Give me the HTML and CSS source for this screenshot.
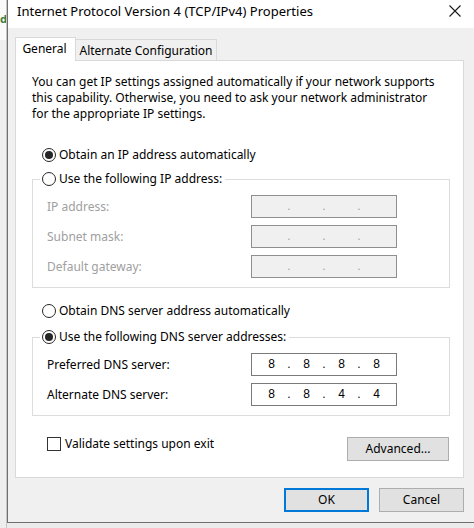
FILE: index.html
```html
<!DOCTYPE html>
<html>
<head>
<meta charset="utf-8">
<title>Internet Protocol Version 4 (TCP/IPv4) Properties</title>
<link rel="stylesheet" href="styles.css">
</head>
<body>
<div class="desk">
  <div class="strip"><span class="strip-d">d</span></div>
  <div class="window">
    <div class="titlebar">
      <span class="title">Internet Protocol Version 4 (TCP/IPv4) Properties</span>
      <span class="close"><svg class="close-icon" width="12" height="12" viewBox="0 0 12 12"><path d="M0.5 0.5L11.5 11.5M11.5 0.5L0.5 11.5" stroke="#1a1a1a" stroke-width="1.1" fill="none"/></svg></span>
    </div>
    <div class="client">
      <div class="tabs">
        <div class="tab tab-active">General</div>
        <div class="tab tab-alt">Alternate Configuration</div>
      </div>
      <div class="panel">
        <p class="intro">You can get IP settings assigned automatically if your network supports<br>this capability. Otherwise, you need to ask your network administrator<br>for the appropriate IP settings.</p>
        <div class="radio-row first"><span class="radio checked"></span><span>Obtain an IP address automatically</span></div>
        <fieldset class="group">
          <legend class="legend"><span class="radio"></span><span>Use the following IP address:</span></legend>
          <div class="field disabled">
            <span class="flabel">IP address:</span>
            <div class="ip ip-off"><span></span><span class="dot">.</span><span></span><span class="dot">.</span><span></span><span class="dot">.</span><span></span></div>
          </div>
          <div class="field disabled">
            <span class="flabel">Subnet mask:</span>
            <div class="ip ip-off"><span></span><span class="dot">.</span><span></span><span class="dot">.</span><span></span><span class="dot">.</span><span></span></div>
          </div>
          <div class="field disabled">
            <span class="flabel">Default gateway:</span>
            <div class="ip ip-off"><span></span><span class="dot">.</span><span></span><span class="dot">.</span><span></span><span class="dot">.</span><span></span></div>
          </div>
        </fieldset>
        <div class="radio-row dns"><span class="radio"></span><span>Obtain DNS server address automatically</span></div>
        <fieldset class="group group-dns">
          <legend class="legend"><span class="radio checked"></span><span>Use the following DNS server addresses:</span></legend>
          <div class="field">
            <span class="flabel">Preferred DNS server:</span>
            <div class="ip"><span>8</span><span class="dot">.</span><span>8</span><span class="dot">.</span><span>8</span><span class="dot">.</span><span>8</span></div>
          </div>
          <div class="field">
            <span class="flabel">Alternate DNS server:</span>
            <div class="ip"><span>8</span><span class="dot">.</span><span>8</span><span class="dot">.</span><span>4</span><span class="dot">.</span><span>4</span></div>
          </div>
        </fieldset>
        <div class="bottom-row">
          <div class="check-row"><span class="checkbox"></span><span>Validate settings upon exit</span></div>
          <div class="btn btn-adv">Advanced...</div>
        </div>
      </div>
      <div class="actions">
        <div class="btn btn-ok">OK</div>
        <div class="btn">Cancel</div>
      </div>
    </div>
  </div>
</div>
</body>
</html>
```

FILE: styles.css
```css
* { box-sizing: border-box; }
html, body { margin: 0; padding: 0; }
body {
  width: 474px;
  height: 528px;
  overflow: hidden;
  background: #ececec;
  font-family: "Noto Sans", "Open Sans", sans-serif;
  font-size: 12px;
  color: #000;
}
.desk { display: flex; height: 528px; width: 474px; }
.strip {
  width: 7px;
  flex-shrink: 0;
  background: linear-gradient(#fafafa 0 40px, #eeeeee 40px);
  border-right: 1px solid #c6c6c6;
  position: relative;
  overflow: hidden;
}
.strip-d {
  position: absolute;
  left: 0;
  top: 12px;
  font-size: 11px;
  line-height: 14px;
  color: #3a7d3a;
  font-weight: bold;
}
.window {
  width: 467px;
  min-width: 0;
  flex-shrink: 0;
  height: 523px;
  display: flex;
  flex-direction: column;
  border-left: 1px solid #6f6f6f;
  border-bottom: 1px solid #6f6f6f;
}
.titlebar {
  height: 28px;
  flex-shrink: 0;
  background: #fff;
  display: flex;
  align-items: flex-start;
  padding: 3px 13px 0 9px;
}
.title { font-size: 13px; line-height: 16px; white-space: nowrap; }
.close {
  margin-left: auto;
  width: 12px;
  height: 12px;
  margin-top: 2px;
  flex-shrink: 0;
  display: block;
}
.close-icon { display: block; }
.client {
  flex: 1;
  background: #f0f0f0;
  padding: 9px 10px 0 7px;
}
.tabs { display: flex; align-items: flex-end; height: 23px; position: relative; z-index: 1; }
.tab {
  border: 1px solid #d9d9d9;
  border-bottom: none;
  text-align: center;
  white-space: nowrap;
}
.tab-active {
  width: 61px;
  height: 24px;
  margin-bottom: -1px;
  background: #fff;
  line-height: 21px;
  padding-right: 2px;
}
.tab-alt {
  width: 142px;
  height: 21px;
  margin-left: -1px;
  background: #f0f0f0;
  line-height: 21px;
}
.panel {
  background: #fff;
  border: 1px solid #d9d9d9;
  padding: 13px 13px 16px 16px;
  min-width: 0;
  overflow: hidden;
}
.intro { margin: 0; line-height: 16px; white-space: nowrap; }
.radio-row, .legend, .check-row {
  display: flex;
  align-items: center;
  height: 16px;
  line-height: 16px;
  white-space: nowrap;
}
.radio-row { margin-left: 10px; }
.radio-row.first { margin-top: 25px; }
.radio-row.dns { margin-top: 15px; }
.radio {
  width: 14px;
  height: 14px;
  border: 1px solid #262626;
  border-radius: 50%;
  background: #fff;
  margin-right: 3px;
  flex-shrink: 0;
  display: flex;
  align-items: center;
  justify-content: center;
}
.radio.checked::after {
  content: "";
  width: 8px;
  height: 8px;
  border-radius: 50%;
  background: #262626;
}
.group {
  margin: 8px 0 0 0;
  padding: 8px 12px 9px 14px;
  border: 1px solid #dcdcdc;
  min-inline-size: 0;
}
.group-dns { margin-top: 10px; }
.legend { padding: 0 3px 0 2px; margin-left: -7px; }
.field {
  display: grid;
  grid-template-columns: 204px 146px;
  height: 23px;
  line-height: 23px;
  margin-bottom: 7px;
}
.field:last-child { margin-bottom: 0; }
.disabled .flabel { color: #a0a0a0; }
.ip {
  height: 23px;
  border: 1px solid #7a7a7a;
  background: #fff;
  display: grid;
  grid-template-columns: 29px 6px 29px 6px 29px 6px 29px;
  padding: 0 5px;
  line-height: 21px;
  font-family: "Liberation Sans", sans-serif;
  font-size: 12px;
  text-align: center;
}
.ip-off { background: #f0f0f0; border-color: #8f8f8f; color: #a0a0a0; }
.bottom-row {
  margin-top: 20px;
  display: flex;
  justify-content: space-between;
  align-items: flex-start;
  padding-left: 15px;
}
.checkbox {
  width: 14px;
  height: 14px;
  border: 1px solid #333;
  background: #fff;
  margin-right: 4px;
  flex-shrink: 0;
}
.btn {
  width: 85px;
  height: 24px;
  background: #e1e1e1;
  border: 1px solid #adadad;
  text-align: center;
  line-height: 22px;
}
.btn-adv { width: 102px; margin-top: 1px; margin-right: 1px; }
.btn-ok { border-color: #0078d7; box-shadow: inset 0 0 0 1px #0078d7; }
.actions {
  display: flex;
  justify-content: flex-end;
  gap: 10px;
  margin-top: 10px;
}
```
